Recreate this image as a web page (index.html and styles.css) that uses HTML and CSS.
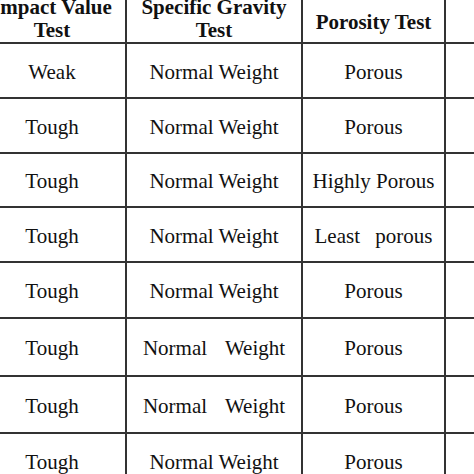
FILE: index.html
```html
<!DOCTYPE html>
<html>
<head>
<meta charset="utf-8">
<link rel="stylesheet" href="styles.css">
</head>
<body>
<div class="table">
  <div class="cell head">Impact Value<br>Test</div>
  <div class="cell head">Specific Gravity<br>Test</div>
  <div class="cell head single">Porosity Test</div>
  <div class="cell head"></div>

  <div class="cell">Weak</div>
  <div class="cell">Normal Weight</div>
  <div class="cell">Porous</div>
  <div class="cell"></div>

  <div class="cell">Tough</div>
  <div class="cell">Normal Weight</div>
  <div class="cell">Porous</div>
  <div class="cell"></div>

  <div class="cell">Tough</div>
  <div class="cell">Normal Weight</div>
  <div class="cell">Highly Porous</div>
  <div class="cell"></div>

  <div class="cell">Tough</div>
  <div class="cell">Normal Weight</div>
  <div class="cell spread-sm">Least porous</div>
  <div class="cell"></div>

  <div class="cell">Tough</div>
  <div class="cell">Normal Weight</div>
  <div class="cell">Porous</div>
  <div class="cell"></div>

  <div class="cell">Tough</div>
  <div class="cell spread">Normal Weight</div>
  <div class="cell">Porous</div>
  <div class="cell"></div>

  <div class="cell">Tough</div>
  <div class="cell spread">Normal Weight</div>
  <div class="cell">Porous</div>
  <div class="cell"></div>

  <div class="cell">Tough</div>
  <div class="cell">Normal Weight</div>
  <div class="cell">Porous</div>
  <div class="cell"></div>
</div>
</body>
</html>
```

FILE: styles.css
```css
html, body {
  margin: 0;
  padding: 0;
  background: #ffffff;
  overflow: hidden;
}

.table {
  display: grid;
  grid-template-columns: 146px 174px 141px 100px;
  grid-template-rows: 50px 53px 53px 52px 53px 54px 56px 55px 53px;
  gap: 2px;
  background: #333333;
  margin-left: -21px;
  margin-top: -8px;
  width: max-content;
  font-family: "Liberation Serif", "Times New Roman", serif;
  font-size: 21px;
  color: #111111;
}

.cell {
  background: #ffffff;
  display: flex;
  align-items: center;
  justify-content: center;
  text-align: center;
  padding-top: 3px;
  box-sizing: border-box;
  white-space: nowrap;
}

.head {
  font-weight: bold;
  line-height: 23px;
  align-items: flex-end;
  padding-top: 0;
  padding-bottom: 0;
}

.head.single {
  align-items: center;
  padding-top: 10px;
}

.spread {
  word-spacing: 13px;
}

.spread-sm {
  word-spacing: 10px;
}
```
